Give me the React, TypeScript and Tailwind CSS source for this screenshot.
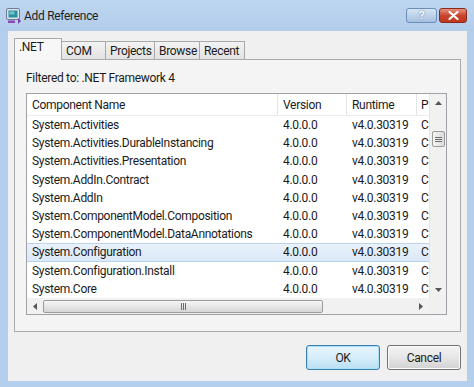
import React from "react";

const rows = [
  "System.Activities",
  "System.Activities.DurableInstancing",
  "System.Activities.Presentation",
  "System.AddIn.Contract",
  "System.AddIn",
  "System.ComponentModel.Composition",
  "System.ComponentModel.DataAnnotations",
  "System.Configuration",
  "System.Configuration.Install",
  "System.Core",
];

const tabs = [
  { label: "COM", w: 45 },
  { label: "Projects", w: 50 },
  { label: "Browse", w: 46 },
  { label: "Recent", w: 46 },
];

function TitleIcon() {
  return (
    <svg width="17" height="17" viewBox="0 0 17 17">
      <rect x="1.5" y="1.5" width="13" height="11" rx="1.5" fill="#d9e3ee" stroke="#6d7f96" />
      <rect x="3.5" y="3.5" width="9" height="7" fill="#2f8e9e" />
      <rect x="4.5" y="4.5" width="5" height="3" fill="#6fc7cf" />
      <path d="M3 13.5 L10 13.5 L10 16 L3 16 Z" fill="#8a49b5" />
      <path d="M13 11 L16 14 L13 17 Z" fill="#7c3fa8" />
    </svg>
  );
}

function Grip({ vertical }: { vertical?: boolean }) {
  return (
    <div className={`flex ${vertical ? "flex-col" : "flex-row"} gap-[1px]`}>
      {[0, 1, 2].map((i) => (
        <div
          key={i}
          className={vertical ? "w-[7px] h-[1px] bg-[#6b6b6b]" : "w-[1px] h-[7px] bg-[#6b6b6b]"}
        />
      ))}
    </div>
  );
}

export default function App() {
  return (
    <div
      className="w-[474px] h-[387px] bg-[#b4cfee] flex flex-col overflow-hidden text-[#1b1b1b] tracking-[-0.3px]"
      style={{ fontFamily: 'Roboto, "Noto Sans", sans-serif' }}
    >
      {/* title bar */}
      <div className="h-[31px] flex items-center pl-[5px] pr-[7px] bg-gradient-to-b from-[#bdd5ef] to-[#b2cdec]">
        <TitleIcon />
        <span className="ml-[2px] text-[12px] text-[#1e1e1e]">Add Reference</span>
        <div className="flex-1" />
        <div className="flex items-center gap-[2px] -mt-[1px]">
          <div className="w-[31px] h-[15px] rounded-[3px] border border-[#6c8fb7] bg-gradient-to-b from-[#d6e4f3] to-[#a5c1e0] flex items-center justify-center text-[11px] font-bold text-white leading-none [text-shadow:0_0_2px_#4a6d96]">
            ?
          </div>
          <div className="w-[28px] h-[15px] rounded-[3px] border border-[#8b2a1c] bg-gradient-to-b from-[#e7917f] via-[#c9442c] to-[#c1361f] flex items-center justify-center">
            <svg width="11" height="9" viewBox="0 0 11 9">
              <path d="M1.5 1 L9.5 8 M9.5 1 L1.5 8" stroke="white" strokeWidth="2.2" strokeLinecap="round" />
            </svg>
          </div>
        </div>
      </div>

      {/* client */}
      <div className="ml-[8px] mr-[7px] h-[350px] bg-[#f0f0f0] flex flex-col pl-[6px] pr-[6px] pt-[7px]">
        {/* tab strip */}
        <div className="flex items-end h-[21px] relative z-10">
          <div className="w-[48px] h-[22px] -mb-[1px] bg-[#f7f7f7] border border-b-0 border-[#a9a9a9] text-[12px] pl-[4px] leading-[17px]">
            .NET
          </div>
          {tabs.map((t) => (
            <div
              key={t.label}
              className="h-[18px] -ml-[1px] first:ml-0 border border-b-0 border-[#a9a9a9] bg-gradient-to-b from-[#f3f3f3] to-[#e2e2e2] text-[12px] px-[4px] leading-[18px] whitespace-nowrap"
              style={{ width: t.w }}
            >
              {t.label}
            </div>
          ))}
        </div>

        {/* tab panel */}
        <div className="w-[447px] h-[273px] border border-[#aaaaaa] bg-[#f4f4f4] pl-[11px] pr-[12px] pt-[11px]">
          <div className="text-[12px] leading-[15px]">Filtered to: .NET Framework 4</div>

          {/* list box */}
          <div className="mt-[7px] w-[421px] h-[222px] border border-[#9da2a8] bg-white flex flex-col">
            <div className="flex h-[204px]">
              <div className="flex-1 flex flex-col overflow-hidden">
                {/* header */}
                <div className="h-[22px] flex text-[12px] border-b border-[#ececec]">
                  <div className="w-[251px] pl-[5px] leading-[23px] border-r border-[#e3e3e3]">Component Name</div>
                  <div className="w-[69px] pl-[5px] leading-[23px] border-r border-[#e3e3e3]">Version</div>
                  <div className="w-[70px] pl-[5px] leading-[23px] border-r border-[#e3e3e3]">Runtime</div>
                  <div className="flex-1 pl-[4px] leading-[23px]">P</div>
                </div>
                {rows.map((r) => {
                  const sel = r === "System.Configuration";
                  return (
                    <div
                      key={r}
                      className={`h-[18.2px] flex text-[12px] leading-[17.5px] whitespace-nowrap border-y ${
                        sel ? "bg-gradient-to-b from-[#eaf2fb] to-[#dbe8f8] border-[#bcd3ee]" : "border-transparent"
                      }`}
                    >
                      <div className="w-[251px] pl-[5px]">{r}</div>
                      <div className="w-[69px] pl-[5px]">4.0.0.0</div>
                      <div className="w-[70px] pl-[5px]">v4.0.30319</div>
                      <div className="flex-1 pl-[4px]">C</div>
                    </div>
                  );
                })}
              </div>

              {/* vertical scrollbar */}
              <div className="w-[17px] bg-[#f1f1f1] border-l border-[#e6e6e6] flex flex-col items-center">
                <div className="h-[17px] flex items-center justify-center">
                  <svg width="7" height="4" viewBox="0 0 7 4">
                    <path d="M0 4 L3.5 0 L7 4 Z" fill="#555" />
                  </svg>
                </div>
                <div className="mt-[20px] w-[13px] h-[16px] rounded-[2px] border border-[#9b9b9b] bg-gradient-to-r from-[#f6f6f6] to-[#dadada] flex items-center justify-center">
                  <Grip vertical />
                </div>
                <div className="flex-1" />
                <div className="h-[17px] flex items-center justify-center">
                  <svg width="7" height="4" viewBox="0 0 7 4">
                    <path d="M0 0 L7 0 L3.5 4 Z" fill="#555" />
                  </svg>
                </div>
              </div>
            </div>

            {/* horizontal scrollbar */}
            <div className="h-[16px] flex">
              <div className="flex-1 bg-[#f1f1f1] flex items-center">
                <div className="w-[16px] flex items-center justify-center">
                  <svg width="4" height="7" viewBox="0 0 4 7">
                    <path d="M4 0 L0 3.5 L4 7 Z" fill="#555" />
                  </svg>
                </div>
                <div className="w-[280px] h-[13px] rounded-[2px] border border-[#9b9b9b] bg-gradient-to-b from-[#f6f6f6] to-[#d6d6d6] flex items-center justify-center">
                  <Grip />
                </div>
                <div className="flex-1" />
                <div className="w-[16px] flex items-center justify-center">
                  <svg width="4" height="7" viewBox="0 0 4 7">
                    <path d="M0 0 L4 3.5 L0 7 Z" fill="#555" />
                  </svg>
                </div>
              </div>
              <div className="w-[17px] bg-[#f0f0f0]" />
            </div>
          </div>
        </div>

        {/* buttons */}
        <div className="flex justify-end gap-[7px] mt-[13px]">
          <button className="w-[74px] h-[25px] rounded-[3px] border border-[#3c7fb1] bg-gradient-to-b from-[#e8f5fd] via-[#d6edfa] to-[#b9dff4] text-[12px] shadow-[inset_0_0_0_1px_#a8e0f8]">
            OK
          </button>
          <button className="w-[74px] h-[25px] rounded-[3px] border border-[#707070] bg-gradient-to-b from-[#f4f4f4] via-[#e6e6e6] to-[#d2d2d2] text-[12px] shadow-[inset_0_0_0_1px_#fcfcfc]">
            Cancel
          </button>
        </div>
      </div>
    </div>
  );
}
